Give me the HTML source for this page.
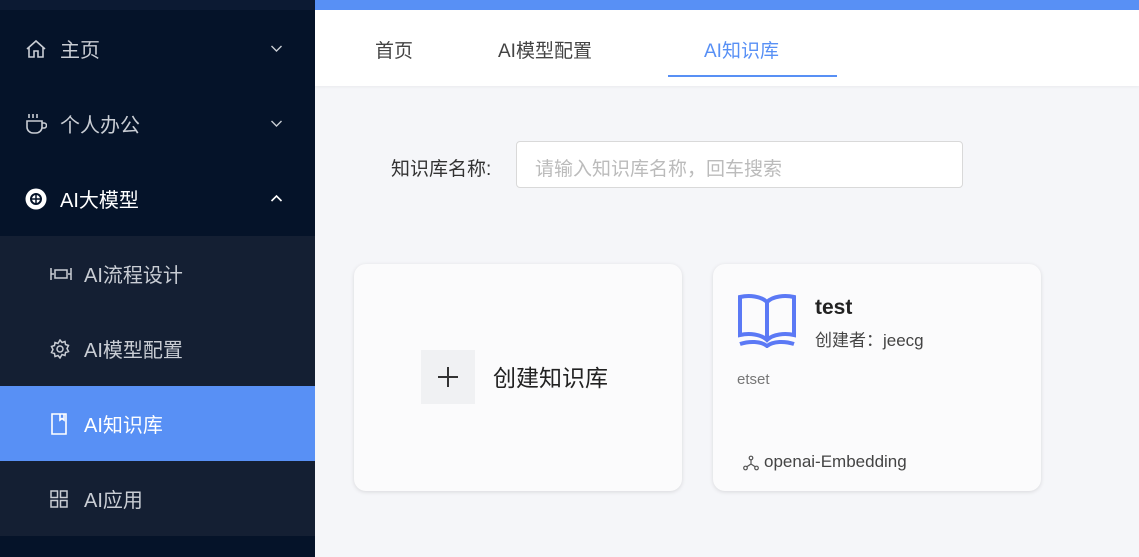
<!DOCTYPE html>
<html><head><meta charset="utf-8"><style>
*{margin:0;padding:0;box-sizing:border-box}
body{width:1139px;height:557px;overflow:hidden;background:#f5f6f9;font-family:"Liberation Sans","Noto Sans CJK SC",sans-serif;position:relative}
.side{position:absolute;left:0;top:0;width:315px;height:557px;background:#051329}
.side .topband{height:10px;background:#0c1a33}
.item{position:absolute;left:0;width:315px;height:75px;display:flex;align-items:center;font-size:20px;color:#c9cdd4}
.item .ic{position:absolute;left:25px;top:50%;transform:translateY(-50%)}
.item .t{position:absolute;left:60px}
.sub{background:#141f33}
.sub .ic{left:50px}
.sub .t{left:84px}
.chev{position:absolute;left:270px;width:13px;height:13px}
.top{position:absolute;left:315px;top:0;width:824px;height:86px;background:#fff;box-shadow:0 1px 3px rgba(0,0,0,.05)}
.top .bar{height:10px;background:#5890f5}
.tab{position:absolute;top:36px;font-size:19px;color:#444}
.card{position:absolute;top:264px;width:328px;height:227px;background:#fbfbfc;border-radius:12px;box-shadow:0 1px 4px rgba(0,0,0,.12)}
</style></head><body>
<div class="side">
<div class="topband"></div>
<div class="item" style="top:11px"><svg class="ic" width="22" height="20" viewBox="0 0 22 20" fill="none" stroke="#c9cdd4" stroke-width="1.6"><path d="M2 10L11 2l9 8M4 8v10h5v-6h4v6h5V8"/></svg><span class="t">主页</span><svg class="chev" style="top:31px" viewBox="0 0 13 13"><path d="M1.5 4l5 5 5-5" stroke="#c9cdd4" stroke-width="1.4" fill="none"/></svg></div>
<div class="item" style="top:86px"><svg class="ic" width="22" height="24" viewBox="0 0 22 24" fill="none" stroke="#c9cdd4" stroke-width="1.6"><path d="M4 2v4M8 2v4M12 2v4M2 9h15v6a6 6 0 0 1-6 6H8a6 6 0 0 1-6-6zM17 11h2a2 2 0 0 1 0 5h-2"/></svg><span class="t">个人办公</span><svg class="chev" style="top:31px" viewBox="0 0 13 13"><path d="M1.5 4l5 5 5-5" stroke="#c9cdd4" stroke-width="1.4" fill="none"/></svg></div>
<div class="item" style="top:161px;color:#fff"><svg class="ic" width="22" height="22" viewBox="0 0 22 22"><circle cx="11" cy="11" r="10.5" fill="#fff"/><circle cx="11" cy="11" r="5" fill="none" stroke="#051329" stroke-width="2"/><path d="M6 11h10M11 6v10" stroke="#051329" stroke-width="1.5"/></svg><span class="t">AI大模型</span><svg class="chev" style="top:31px" viewBox="0 0 13 13"><path d="M1.5 9l5-5 5 5" stroke="#fff" stroke-width="1.6" fill="none"/></svg></div>
<div class="item sub" style="top:236px"><svg class="ic" width="22" height="14" viewBox="0 0 22 14" fill="none" stroke="#c9cdd4" stroke-width="1.5"><path d="M1 1v12M21 1v12M1 7h3M18 7h3M5 3h12v8H5z"/></svg><span class="t">AI流程设计</span></div>
<div class="item sub" style="top:311px"><svg class="ic" width="20" height="20" viewBox="0 0 20 20" fill="none" stroke="#c9cdd4" stroke-width="1.5"><circle cx="10" cy="10" r="3"/><path d="M10 1l2 2.5 3-1 .5 3 3 1-1.5 3 1.5 3-3 1-.5 3-3-1L10 19l-2-2.5-3 1-.5-3-3-1 1.5-3-1.5-3 3-1 .5-3 3 1z"/></svg><span class="t">AI模型配置</span></div>
<div class="item" style="top:386px;background:#5890f5;color:#fff"><svg class="ic" style="left:50px" width="18" height="22" viewBox="0 0 18 22" fill="none" stroke="#fff" stroke-width="1.6"><path d="M2 1h14v20H2zM10 1v6l2-1.5L14 7V1"/></svg><span class="t" style="left:84px">AI知识库</span></div>
<div class="item sub" style="top:461px"><svg class="ic" width="18" height="18" viewBox="0 0 18 18" fill="none" stroke="#c9cdd4" stroke-width="1.5"><rect x="1" y="1" width="6.5" height="6.5"/><rect x="10.5" y="1" width="6.5" height="6.5"/><rect x="1" y="10.5" width="6.5" height="6.5"/><rect x="10.5" y="10.5" width="6.5" height="6.5"/></svg><span class="t">AI应用</span></div>
</div>
<div class="top"><div class="bar"></div>
<span class="tab" style="left:60px">首页</span>
<span class="tab" style="left:183px">AI模型配置</span>
<span class="tab" style="left:389px;color:#5890f5">AI知识库</span>
<div style="position:absolute;left:353px;top:75px;width:169px;height:2px;background:#5890f5"></div>
</div>
<div style="position:absolute;left:391px;top:154px;font-size:19px;color:#333">知识库名称:</div>
<div style="position:absolute;left:516px;top:141px;width:447px;height:47px;background:#fff;border:1px solid #d9d9d9;border-radius:4px;font-size:19px;color:#bbb;padding:12px 18px">请输入知识库名称，回车搜索</div>
<div class="card" style="left:354px">
<div style="position:absolute;left:67px;top:86px;width:54px;height:54px;background:#f0f1f3"><svg width="54" height="54" viewBox="0 0 54 54"><path d="M27 17v20M17 27h20" stroke="#333" stroke-width="2"/></svg></div>
<div style="position:absolute;left:139px;top:95px;font-size:23px;color:#222">创建知识库</div>
</div>
<div class="card" style="left:713px">
<svg style="position:absolute;left:24px;top:28px" width="60" height="56" viewBox="0 0 60 56" fill="none" stroke="#5b79f5" stroke-width="4"><path d="M30 10C24 4 12 3 3 5v38c9-2 21-1 27 5 6-6 18-7 27-5V5C48 3 36 4 30 10zM30 10v38M3 52c9-3 21-3 27 2 6-5 18-5 27-2"/></svg>
<div style="position:absolute;left:102px;top:32px;font-size:21px;font-weight:bold;color:#222">test</div>
<div style="position:absolute;left:102px;top:62px;font-size:17px;color:#444">创建者：jeecg</div>
<div style="position:absolute;left:24px;top:107px;font-size:15px;color:#777">etset</div>
<svg style="position:absolute;left:30px;top:191px" width="16" height="16" viewBox="0 0 16 16" fill="none" stroke="#555" stroke-width="1.2"><circle cx="8" cy="3" r="1.8"/><circle cx="2.5" cy="13" r="1.8"/><circle cx="13.5" cy="13" r="1.8"/><path d="M8 5v4M8 9l-4.5 3M8 9l4.5 3"/></svg>
<div style="position:absolute;left:51px;top:188px;font-size:17px;color:#444">openai-Embedding</div>
</div>
</body></html>
